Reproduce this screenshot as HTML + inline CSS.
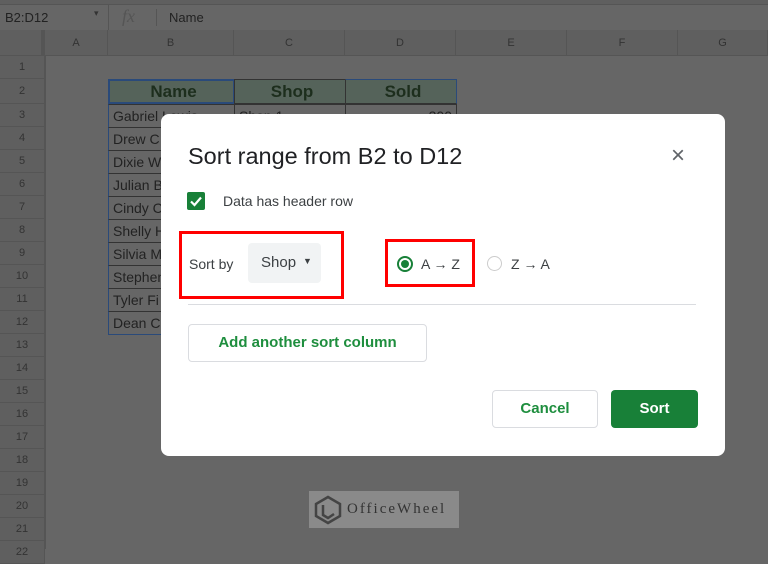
<!DOCTYPE html><html><head><style>
body{margin:0;width:768px;height:549px;overflow:hidden;background:#666;font-family:"Liberation Sans",Arial,sans-serif;position:relative}
.a{position:absolute}
.rh{position:absolute;left:0;width:45px;border-bottom:1px solid #555;background:#5f5f5f;color:#333;font-size:11px;text-align:center;box-sizing:border-box}
.ch{position:absolute;top:30px;height:26px;border-right:1px solid #555;border-bottom:1px solid #555;background:#5f5f5f;color:#333;font-size:11px;text-align:center;line-height:26px;box-sizing:border-box}
.c{position:absolute;border:1px solid #333;box-sizing:border-box;font-size:14px;color:#222;padding-left:4px;overflow:hidden;white-space:nowrap}
.dlg{position:absolute;left:161px;top:114px;width:564px;height:342px;background:#fff;border-radius:8px}
.btn{position:absolute;border:1px solid #dadce0;border-radius:4px;box-sizing:border-box;text-align:center;font-size:15px;font-weight:bold;color:#1e8e3e}
</style></head><body>
<div class="a" style="left:0;top:0;width:768px;height:4px;background:#5f5f5f;border-bottom:1px solid #555"></div>
<div class="a" style="left:0;top:5px;width:768px;height:25px;background:#666;border-bottom:1px solid #555;font-size:13px;color:#222">
<span class="a" style="left:5px;top:5px">B2:D12</span><span class="a" style="left:94px;top:3px;font-size:9px;color:#333">▾</span>
<span class="a" style="left:108px;top:0;width:1px;height:25px;background:#555"></span>
<span class="a" style="left:122px;top:1px;font-family:'Liberation Serif';font-style:italic;font-size:18px;color:#555">fx</span>
<span class="a" style="left:156px;top:4px;width:1px;height:17px;background:#555"></span>
<span class="a" style="left:169px;top:5px">Name</span></div>
<div class="rh" style="top:30px;height:26px;border-right:4px solid #555"></div>
<div class="ch" style="left:45px;width:63px">A</div><div class="ch" style="left:108px;width:126px">B</div><div class="ch" style="left:234px;width:111px">C</div><div class="ch" style="left:345px;width:111px">D</div><div class="ch" style="left:456px;width:111px">E</div><div class="ch" style="left:567px;width:111px">F</div><div class="ch" style="left:678px;width:90px">G</div>
<div id="rows"></div>
<div class="a" style="left:45px;top:56px;width:1px;height:493px;background:#555"></div>
<div class="c" style="left:108px;top:79px;width:127px;height:25px;background:#55635a;border:2px solid #2a4a7a;text-align:center;font-weight:bold;font-size:17px;line-height:22px;color:#1d2e1d">Name</div>
<div class="c" style="left:234px;top:79px;width:112px;height:25px;background:#55635a;text-align:center;font-weight:bold;font-size:17px;line-height:23px;color:#1d2e1d">Shop</div>
<div class="c" style="left:345px;top:79px;width:112px;height:25px;background:#55635a;text-align:center;font-weight:bold;font-size:17px;line-height:23px;color:#1d2e1d;border-right:1px solid #2a4a7a;border-top:1px solid #2a4a7a">Sold</div>
<div id="cells"></div>
<div class="a" style="left:309px;top:491px;width:150px;height:37px;background:#8a8a8a"><svg class="a" style="left:4px;top:4px" width="30" height="30" viewBox="0 0 30 30" fill="none" stroke="#444" stroke-width="2.5"><path d="M15 2L27 9V21L15 28L3 21V9Z"/><path d="M10 10V20L15 23L21 19"/></svg><span class="a" style="left:38px;top:10px;font-family:'Liberation Serif';font-size:15px;letter-spacing:2px;color:#333">OfficeWheel</span></div>
<div class="dlg">
<div class="a" style="left:27px;top:29px;font-size:23.5px;color:#202124">Sort range from B2 to D12</div>
<div class="a" style="left:510px;top:28px;font-size:24px;color:#5f6368">×</div>
<div class="a" style="left:26px;top:78px;width:18px;height:18px;background:#188038;border-radius:2px"><svg width="18" height="18"><path d="M4 9.5L7.5 13L14 5.5" stroke="#fff" stroke-width="2.2" fill="none"/></svg></div>
<div class="a" style="left:62px;top:79px;font-size:14px;color:#3c4043">Data has header row</div>
<div class="a" style="left:18px;top:117px;width:165px;height:68px;border:3px solid #f00;box-sizing:border-box"></div>
<div class="a" style="left:28px;top:142px;font-size:14px;color:#3c4043">Sort by</div>
<div class="a" style="left:87px;top:129px;width:73px;height:40px;background:#f1f3f4;border-radius:4px;font-size:15px;color:#3c4043"><span class="a" style="left:13px;top:11px">Shop</span><span class="a" style="left:55px;top:13px;font-size:9px">▼</span></div>
<div class="a" style="left:224px;top:125px;width:90px;height:48px;border:3px solid #f00;box-sizing:border-box"></div>
<div class="a" style="left:236px;top:142px;width:12px;height:12px;border:2px solid #188038;border-radius:50%"><div class="a" style="left:2px;top:2px;width:8px;height:8px;background:#188038;border-radius:50%"></div></div>
<div class="a" style="left:260px;top:142px;font-size:14px;color:#3c4043">A → Z</div>
<div class="a" style="left:326px;top:142px;width:13px;height:13px;border:1.5px solid #ccc;border-radius:50%"></div>
<div class="a" style="left:350px;top:142px;font-size:14px;color:#3c4043">Z → A</div>
<div class="a" style="left:27px;top:190px;width:508px;height:1px;background:#dadce0"></div>
<div class="btn" style="left:27px;top:210px;width:239px;height:38px;line-height:36px">Add another sort column</div>
<div class="btn" style="left:331px;top:276px;width:106px;height:38px;line-height:36px">Cancel</div>
<div class="btn" style="left:450px;top:276px;width:87px;height:38px;line-height:38px;background:#188038;color:#fff;border:none">Sort</div>
</div>
<script>
var r='',y=56;for(var i=1;i<=22;i++){var h=i==2?25:23;r+='<div class="rh" style="top:'+y+'px;height:'+h+'px;line-height:'+h+'px;border-right:1px solid #555">'+i+'</div>';y+=h;}
document.getElementById('rows').innerHTML=r;
var n=['Gabriel Lewis','Drew C','Dixie W','Julian B','Cindy C','Shelly H','Silvia M','Stephen','Tyler Fi','Dean C'],c='';
for(var j=0;j<10;j++){var t=104+j*23;c+='<div class="c" style="left:108px;top:'+t+'px;width:127px;height:24px;line-height:22px;border-left:1px solid #2a4a7a'+(j==9?';border-bottom:1px solid #2a4a7a':'')+'">'+n[j]+'</div><div class="c" style="left:234px;top:'+t+'px;width:112px;height:24px;line-height:22px">Shop 1</div><div class="c" style="left:345px;top:'+t+'px;width:112px;height:24px;line-height:22px;text-align:right;padding-right:4px">300</div>';}
document.getElementById('cells').innerHTML=c;
</script>
</body></html>
